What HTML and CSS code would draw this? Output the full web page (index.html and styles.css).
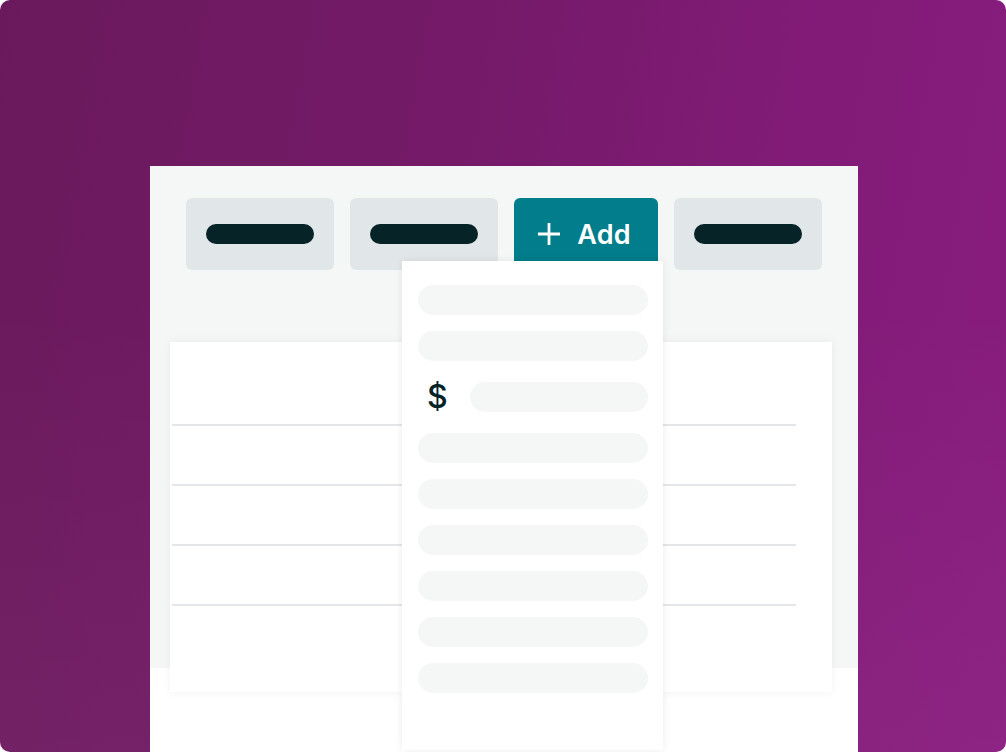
FILE: index.html
```html
<!DOCTYPE html>
<html>
<head>
<meta charset="utf-8">
<link rel="stylesheet" href="styles.css">
</head>
<body>
<div class="stage">
  <div class="panel">
    <div class="tabs">
      <div class="tab"><span class="bar"></span></div>
      <div class="tab"><span class="bar"></span></div>
      <div class="tab tab-add">
        <svg class="plus" viewBox="0 0 24 24" width="24" height="24"><path d="M12 1V23M1 12H23" stroke="#fff" stroke-width="2.8" fill="none"/></svg>
        <span class="add-label">Add</span>
      </div>
      <div class="tab"><span class="bar"></span></div>
    </div>
    <div class="card">
      <div class="row"></div>
      <div class="row"></div>
      <div class="row"></div>
      <div class="row"></div>
    </div>
    <div class="menu">
      <div class="item"></div>
      <div class="item"></div>
      <div class="item-row">
        <span class="dollar">$</span>
        <div class="item grow"></div>
      </div>
      <div class="item"></div>
      <div class="item"></div>
      <div class="item"></div>
      <div class="item"></div>
      <div class="item"></div>
      <div class="item"></div>
    </div>
  </div>
</div>
</body>
</html>
```
FILE: styles.css
```css
* { box-sizing: border-box; }
html, body { margin: 0; padding: 0; background: #fff; }
body { width: 1006px; height: 752px; overflow: hidden; font-family: Inter, "Noto Sans", sans-serif; }

.stage {
  width: 1006px;
  height: 752px;
  border-radius: 10px;
  overflow: hidden;
  padding: 166px 148px 0 150px;
  background:
    linear-gradient(180deg, rgba(255,255,255,0) 40%, rgba(255,220,240,0.04) 100%),
    linear-gradient(100deg, #6a1a5c 0%, #741a68 40%, #821b78 75%, #891c7f 100%);
}

.panel {
  position: relative;
  width: 708px;
  height: 586px;
  padding: 32px 26px 0 20px;
  background: linear-gradient(180deg, #f5f7f6 0, #f5f7f6 502px, #ffffff 502px);
}

.tabs {
  display: flex;
  gap: 16px;
  margin-left: 16px;
  height: 72px;
}
.tab {
  width: 148px;
  height: 72px;
  border-radius: 6px;
  background: #e1e6e8;
  display: flex;
  align-items: center;
  justify-content: center;
}
.bar {
  width: 108px;
  height: 20px;
  border-radius: 10px;
  background: #062328;
}
.tab-add {
  width: 144px;
  background: #017d8b;
  color: #fff;
  gap: 16px;
  padding-right: 4px;
}
.plus { display: block; flex: none; }
.add-label {
  font-size: 27px;
  font-weight: 600;
  line-height: 1;
  letter-spacing: 0.2px;
}

.card {
  margin-top: 72px;
  width: 662px;
  height: 350px;
  background: #fff;
  box-shadow: 0 0 10px rgba(0, 0, 0, 0.06);
  padding: 82px 36px 0 2px;
}
.row {
  height: 60px;
  border-top: 2px solid #e3e7e9;
}

.menu {
  position: absolute;
  left: 252px;
  top: 95px;
  width: 261px;
  height: 489px;
  background: #fff;
  box-shadow: 0 0 8px rgba(0, 0, 0, 0.08);
  padding: 24px 15px 0 16px;
  display: flex;
  flex-direction: column;
  gap: 16px;
}
.item {
  height: 30px;
  border-radius: 15px;
  background: #f5f7f6;
  flex: none;
}
.item-row {
  height: 40px;
  display: flex;
  align-items: center;
  flex: none;
}
.dollar {
  width: 52px;
  padding-left: 9px;
  font-size: 32px;
  font-weight: 500;
  color: #062328;
  line-height: 1;
}
.grow { flex: 1; }
```
